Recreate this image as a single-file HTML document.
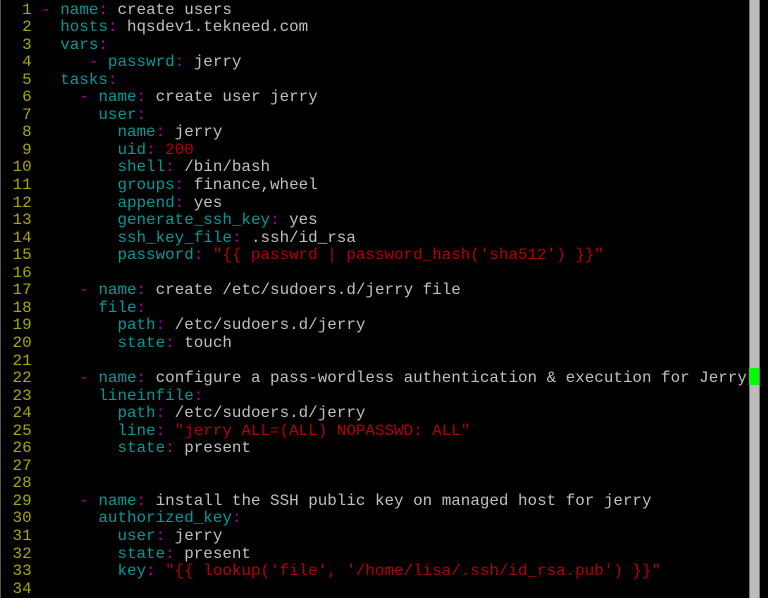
<!DOCTYPE html>
<html><head><meta charset="utf-8"><style>
html,body{margin:0;padding:0;background:#000;width:768px;height:598px;overflow:hidden}
#t{position:absolute;left:0;top:0;width:768px;height:598px;background:#000;border-left:1px solid #555;box-sizing:border-box}
#w{position:absolute;left:0;top:1.5px}
.l{position:absolute;left:2px;height:17.55px;line-height:17.55px;white-space:pre;font-family:"Liberation Mono",monospace;font-size:15.9px;color:#c0c0c0}
.n{color:#a8a800}.k{color:#009a9a}.c{color:#b000b0}.s{color:#b40000}
#sb{position:absolute;left:748px;top:0;width:9px;height:598px;background:#bcbcbc;border-left:1px solid #777;border-right:1px solid #777}
#cur{position:absolute;left:748px;top:368px;width:10px;height:17px;background:#00ff00}
</style></head><body><div id="t"><div id="w">
<div class="l" style="top:0px"><span class="n">  1</span> <span class="c">-</span> <span class="k">name</span><span class="c">:</span> create users</div>
<div class="l" style="top:17.55px"><span class="n">  2</span>   <span class="k">hosts</span><span class="c">:</span> hqsdev1.tekneed.com</div>
<div class="l" style="top:35.1px"><span class="n">  3</span>   <span class="k">vars</span><span class="c">:</span></div>
<div class="l" style="top:52.65px"><span class="n">  4</span>      <span class="c">-</span> <span class="k">passwrd</span><span class="c">:</span> jerry</div>
<div class="l" style="top:70.2px"><span class="n">  5</span>   <span class="k">tasks</span><span class="c">:</span></div>
<div class="l" style="top:87.75px"><span class="n">  6</span>     <span class="c">-</span> <span class="k">name</span><span class="c">:</span> create user jerry</div>
<div class="l" style="top:105.3px"><span class="n">  7</span>       <span class="k">user</span><span class="c">:</span></div>
<div class="l" style="top:122.85px"><span class="n">  8</span>         <span class="k">name</span><span class="c">:</span> jerry</div>
<div class="l" style="top:140.4px"><span class="n">  9</span>         <span class="k">uid</span><span class="c">:</span> <span class="s">200</span></div>
<div class="l" style="top:157.95px"><span class="n"> 10</span>         <span class="k">shell</span><span class="c">:</span> /bin/bash</div>
<div class="l" style="top:175.5px"><span class="n"> 11</span>         <span class="k">groups</span><span class="c">:</span> finance,wheel</div>
<div class="l" style="top:193.05px"><span class="n"> 12</span>         <span class="k">append</span><span class="c">:</span> yes</div>
<div class="l" style="top:210.6px"><span class="n"> 13</span>         <span class="k">generate_ssh_key</span><span class="c">:</span> yes</div>
<div class="l" style="top:228.15px"><span class="n"> 14</span>         <span class="k">ssh_key_file</span><span class="c">:</span> .ssh/id_rsa</div>
<div class="l" style="top:245.7px"><span class="n"> 15</span>         <span class="k">password</span><span class="c">:</span> <span class="s">"{{ passwrd | password_hash('sha512') }}"</span></div>
<div class="l" style="top:263.25px"><span class="n"> 16</span></div>
<div class="l" style="top:280.8px"><span class="n"> 17</span>     <span class="c">-</span> <span class="k">name</span><span class="c">:</span> create /etc/sudoers.d/jerry file</div>
<div class="l" style="top:298.35px"><span class="n"> 18</span>       <span class="k">file</span><span class="c">:</span></div>
<div class="l" style="top:315.9px"><span class="n"> 19</span>         <span class="k">path</span><span class="c">:</span> /etc/sudoers.d/jerry</div>
<div class="l" style="top:333.45px"><span class="n"> 20</span>         <span class="k">state</span><span class="c">:</span> touch</div>
<div class="l" style="top:351px"><span class="n"> 21</span></div>
<div class="l" style="top:368.55px"><span class="n"> 22</span>     <span class="c">-</span> <span class="k">name</span><span class="c">:</span> configure a pass-wordless authentication &amp; execution for Jerry</div>
<div class="l" style="top:386.1px"><span class="n"> 23</span>       <span class="k">lineinfile</span><span class="c">:</span></div>
<div class="l" style="top:403.65px"><span class="n"> 24</span>         <span class="k">path</span><span class="c">:</span> /etc/sudoers.d/jerry</div>
<div class="l" style="top:421.2px"><span class="n"> 25</span>         <span class="k">line</span><span class="c">:</span> <span class="s">"jerry ALL=(ALL) NOPASSWD: ALL"</span></div>
<div class="l" style="top:438.75px"><span class="n"> 26</span>         <span class="k">state</span><span class="c">:</span> present</div>
<div class="l" style="top:456.3px"><span class="n"> 27</span></div>
<div class="l" style="top:473.85px"><span class="n"> 28</span></div>
<div class="l" style="top:491.4px"><span class="n"> 29</span>     <span class="c">-</span> <span class="k">name</span><span class="c">:</span> install the SSH public key on managed host for jerry</div>
<div class="l" style="top:508.95px"><span class="n"> 30</span>       <span class="k">authorized_key</span><span class="c">:</span></div>
<div class="l" style="top:526.5px"><span class="n"> 31</span>         <span class="k">user</span><span class="c">:</span> jerry</div>
<div class="l" style="top:544.05px"><span class="n"> 32</span>         <span class="k">state</span><span class="c">:</span> present</div>
<div class="l" style="top:561.6px"><span class="n"> 33</span>         <span class="k">key</span><span class="c">:</span> <span class="s">"{{ lookup('file', '/home/lisa/.ssh/id_rsa.pub') }}"</span></div>
<div class="l" style="top:579.15px"><span class="n"> 34</span></div>
</div>
<div id="sb"></div><div id="cur"></div>
</div></body></html>
